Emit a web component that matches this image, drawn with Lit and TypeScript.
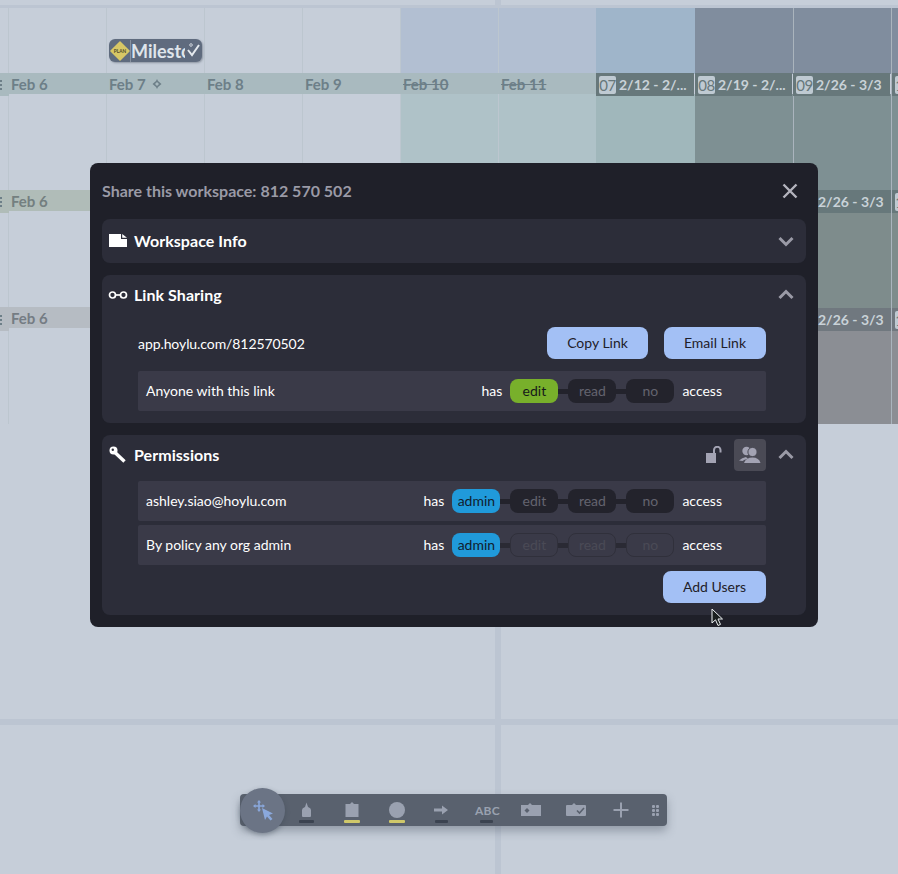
import { LitElement, css, html, svg, unsafeCSS } from "lit";
import { customElement } from "lit/decorators.js";

const FONT = unsafeCSS(`Lato, "Open Sans", "Liberation Sans", sans-serif`);

type Cell = { x: number; w: number; color: string };

const cells: Cell[] = [
  { x: 9, w: 98, color: "#c6ced9" },
  { x: 107, w: 98, color: "#c6ced9" },
  { x: 205, w: 98, color: "#c6ced9" },
  { x: 303, w: 97, color: "#c6ced9" },
  { x: 400, w: 98, color: "#b2bfd2" },
  { x: 498, w: 98, color: "#b2bfd2" },
  { x: 596, w: 99, color: "#9fb5ca" },
  { x: 695, w: 98, color: "#808d9e" },
  { x: 793, w: 98, color: "#808d9e" },
  { x: 891, w: 7, color: "#808d9e" },
];

const dayLabels = [
  { x: 11, t: "Feb 6" },
  { x: 109, t: "Feb 7" },
  { x: 207, t: "Feb 8" },
  { x: 305, t: "Feb 9" },
];

const sprints = [
  { x: 596, w: 99, n: "07", t: "2/12 - 2/..." },
  { x: 695, w: 98, n: "08", t: "2/19 - 2/..." },
  { x: 793, w: 98, n: "09", t: "2/26 - 3/3" },
];

const toolIcons = [
  { x: 66, bar: "#3b4350", w: 15, icon: svg`<path d="M10.5 2.5 L12 7 Q15 8 15 10 V16 Q15 17 14 17 H7 Q6 17 6 16 V10 Q6 8 9 7 Z" fill="#9aa1b0"/>` },
  { x: 112, bar: "#cfc86a", w: 16, icon: svg`<path d="M3.5 4 H8 L10 2 L12 4 H16.5 V17 H3.5 Z" fill="#9aa1b0"/>` },
  { x: 157, bar: "#cfc86a", w: 16, icon: svg`<circle cx="10" cy="10" r="8" fill="#9aa1b0"/>` },
  { x: 201, bar: "#3b4350", w: 13, icon: svg`<path d="M3 8.5 H11 V5.5 L17 10 L11 14.5 V11.5 H3 Z" fill="#9aa1b0"/>` },
  { x: 246, bar: "#3b4350", w: 13, icon: svg`` },
  { x: 291, bar: "", w: 0, icon: svg`<path d="M0 5 H7 L9 3 L11 5 H20 V16 H0 Z" fill="#9aa1b0"/><path d="M6 8 L8.5 10.5 L6 13 L3.5 10.5 Z" fill="#59616e"/>` },
  { x: 336, bar: "", w: 0, icon: svg`<path d="M1 5 H6 L8 3 L10 5 H19 Q20 5 20 6 V15 Q20 16 19 16 H1 Q0 16 0 15 V6 Q0 5 1 5 Z" fill="#9aa1b0"/><path d="M11 10.5 L13.5 13 L18 8" fill="none" stroke="#59616e" stroke-width="1.6"/>` },
  { x: 381, bar: "", w: 0, icon: svg`<path d="M9 2.5 H11 V9 H17.5 V11 H11 V17.5 H9 V11 H2.5 V9 H9 Z" fill="#9aa1b0"/>` },
];

@customElement("app-root")
export class AppRoot extends LitElement {
  static styles = css`
    :host {
      display: block;
      font-family: ${FONT};
    }

    .page {
      position: relative;
      width: 898px;
      height: 874px;
      overflow: hidden;
      background: #c6ced9;
    }

    /* whiteboard canvas: things sit at their place on the board */
    .abs {
      position: absolute;
    }

    .cell {
      position: absolute;
    }

    .green {
      background: #afc2c8;
    }

    .line {
      position: absolute;
      background: #bcc5d2;
    }

    .grid-v {
      position: absolute;
      width: 1px;
      background: #bcc6cf;
    }

    .band {
      position: absolute;
      left: 0;
      height: 21px;
      width: 596px;
      background: #a9babf;
    }

    .stub {
      position: absolute;
      left: 0;
      width: 9px;
      height: 23px;
      display: flex;
      flex-direction: column;
      justify-content: center;
      gap: 2px;
      background: #a9babf;
    }

    .stub i {
      width: 2px;
      height: 2px;
      background: #6d7f88;
    }

    .label {
      position: absolute;
      font-size: 15px;
      font-weight: 700;
      line-height: 22px;
      color: #6d7f88;
      white-space: nowrap;
    }

    .strike {
      text-decoration: line-through;
    }

    .sprint {
      position: absolute;
      display: flex;
      align-items: center;
      gap: 3px;
      height: 23px;
      padding-left: 3px;
      box-sizing: border-box;
      background: #67787b;
      color: #c9d2d8;
      font-size: 14px;
      font-weight: 700;
      white-space: nowrap;
      overflow: hidden;
    }

    .sprint b {
      display: flex;
      align-items: center;
      justify-content: center;
      width: 17px;
      height: 18px;
      border-radius: 2px;
      background: #bfcad2;
      color: #67787b;
      font-weight: 400;
      font-size: 15px;
      letter-spacing: -0.5px;
      flex: none;
    }

    .milestone {
      position: absolute;
      left: 109px;
      top: 39px;
      width: 93px;
      height: 23px;
      box-sizing: border-box;
      display: flex;
      align-items: center;
      padding-left: 1px;
      border-radius: 6px;
      background: #5f6b7e;
      box-shadow: 1px 1px 2px rgba(70, 80, 95, 0.45);
      color: #dfe5eb;
      font-size: 18px;
      font-weight: 700;
      overflow: hidden;
    }

    .milestone span {
      width: 54px;
      overflow: hidden;
      white-space: nowrap;
      border-left: 1px solid #87919f;
    }

    /* dialog */
    .modal {
      position: absolute;
      left: 90px;
      top: 163px;
      width: 728px;
      height: 464px;
      box-sizing: border-box;
      padding: 0 12px;
      border-radius: 8px;
      background: #1f2029;
      color: #fff;
      display: flex;
      flex-direction: column;
      gap: 12px;
    }

    .modal-head {
      display: flex;
      align-items: center;
      justify-content: space-between;
      height: 56px;
      color: #9a9aa6;
      font-size: 16px;
      font-weight: 700;
    }

    .modal-head span {
      margin-bottom: 2px;
    }

    .modal-head svg {
      margin-right: 7px;
      margin-top: -1px;
    }

    .panel {
      border-radius: 8px;
      background: #2c2d39;
    }

    .panel-head {
      display: flex;
      align-items: center;
      height: 44px;
      padding: 0 11px 0 6px;
      font-size: 16px;
      font-weight: 700;
    }

    .panel-head.link {
      height: 39px;
      margin-bottom: 13px;
    }

    .panel-head.perm {
      height: 40px;
      margin-bottom: 6px;
    }

    .panel-head .ico {
      width: 20px;
      height: 20px;
      margin-right: 6px;
      flex: none;
    }

    .panel-head .title {
      flex: 1;
      letter-spacing: 0.05px;
      margin-bottom: 1px;
    }

    .first {
      margin-top: -12px;
    }

    .link-line {
      display: flex;
      align-items: center;
      height: 32px;
      margin: 0 40px 12px 36px;
      font-size: 14px;
    }

    .link-line .url {
      flex: 1;
      letter-spacing: -0.08px;
    }

    .btn {
      display: flex;
      align-items: center;
      justify-content: center;
      box-sizing: border-box;
      height: 32px;
      padding-bottom: 2px;
      border-radius: 8px;
      background: #a3c0f5;
      color: #1f2029;
      font-size: 14px;
    }

    .w101 {
      width: 101px;
    }

    .w102 {
      width: 102px;
      margin-left: 16px;
    }

    .row {
      display: flex;
      align-items: center;
      height: 40px;
      margin: 0 40px 0 36px;
      padding: 0 44px 0 8px;
      background: #3a3a48;
      border-radius: 2px;
      font-size: 14px;
    }

    .row .who {
      flex: 1;
      margin-bottom: 2px;
    }

    .row + .row {
      margin-top: 4px;
    }

    .row.last {
      margin-bottom: 12px;
    }

    .has {
      margin: 0 8px 2px 0;
    }

    .access {
      margin: 0 0 2px 8px;
    }

    .pills {
      display: flex;
      align-items: center;
    }

    .pill {
      display: flex;
      align-items: center;
      justify-content: center;
      box-sizing: border-box;
      width: 48px;
      height: 24px;
      padding-bottom: 2px;
      border-radius: 8px;
      background: #23232c;
      color: #64646f;
      font-size: 14px;
    }

    .joint {
      width: 10px;
      height: 5px;
      background: #23232c;
    }

    .pill.green-on {
      background: #78b02b;
      color: #15181a;
    }

    .pill.blue-on {
      background: #209ada;
      color: #10202e;
    }

    .pill.off {
      background: transparent;
      border: 1px solid #30303b;
      color: #4a4a56;
    }

    .joint.off {
      background: #2a2a34;
    }

    .perm-actions {
      display: flex;
      align-items: center;
    }

    .people {
      display: flex;
      align-items: center;
      justify-content: center;
      width: 32px;
      height: 32px;
      margin: 0 11px 0 12px;
      border-radius: 4px;
      background: #4a4a55;
    }

    .add-line {
      display: flex;
      justify-content: flex-end;
      margin: 6px 40px 12px 0;
    }

    .add-line .btn {
      width: 103px;
    }

    .cursor {
      position: absolute;
      left: 711px;
      top: 608px;
    }

    /* toolbar */
    .toolbar {
      position: absolute;
      left: 240px;
      top: 794px;
      width: 427px;
      height: 32px;
      border-radius: 4px;
      background: #59616e;
      box-shadow: 0 5px 10px rgba(70, 80, 95, 0.4);
    }

    .mode {
      position: absolute;
      left: 0;
      top: -6px;
      width: 45px;
      height: 45px;
      border-radius: 50%;
      background: #6b7485;
      box-shadow: 0 2px 5px rgba(60, 70, 85, 0.45);
    }

    .tool {
      position: absolute;
      top: 6px;
      width: 20px;
      height: 20px;
    }

    .bar {
      position: absolute;
      top: 26px;
      height: 3px;
      border-radius: 1px;
    }

    .abc {
      position: absolute;
      top: 9px;
      left: 235px;
      color: #9aa1b0;
      font-size: 12px;
      font-weight: 700;
      letter-spacing: 0.2px;
    }

    .dots {
      position: absolute;
      left: 412px;
      top: 11px;
      display: grid;
      grid-template-columns: 3px 3px;
      gap: 1px;
    }

    .dots i {
      width: 3px;
      height: 3px;
      background: #9aa1b0;
      border-radius: 1px;
    }
  `;

  private renderStub(top: number, color: string) {
    return html`<div class="stub" style="top:${top}px;background:${color}">
      <i></i><i></i><i></i>
    </div>`;
  }

  private renderPills(active: string, tone: string, dim = false, admin = true) {
    const names = admin ? ["admin", "edit", "read", "no"] : ["edit", "read", "no"];
    const out: unknown[] = [];
    names.forEach((n, i) => {
      if (i > 0) {
        out.push(html`<div class="joint ${dim ? "off" : ""}"></div>`);
      }
      const cls = n === active ? tone : dim ? "off" : "";
      out.push(html`<div class="pill ${cls}">${n}</div>`);
    });
    return html`<div class="pills">${out}</div>`;
  }

  private chevron(up: boolean) {
    return html`<svg width="18" height="18" viewBox="0 0 18 18">
      <path
        d=${up ? "M2.5 12 L9 5.5 L15.5 12" : "M2.5 6 L9 12.5 L15.5 6"}
        fill="none"
        stroke="#9a9aa6"
        stroke-width="3"
      />
    </svg>`;
  }

  render() {
    return html`
      <div class="page">
        ${cells.map(
          (c) => html`<div class="cell" style="left:${c.x}px;top:8px;width:${c.w}px;height:66px;background:${c.color}"></div>`,
        )}
        <div class="cell green" style="left:400px;top:94px;width:196px;height:70px"></div>
        <div class="cell" style="left:596px;top:94px;width:99px;height:70px;background:#a0b7bb"></div>
        <div class="cell" style="left:695px;top:94px;width:203px;height:96px;background:#7e9093"></div>
        <div class="cell" style="left:818px;top:212px;width:80px;height:96px;background:#7e8c8c"></div>
        <div class="cell" style="left:818px;top:330px;width:80px;height:94px;background:#8b8e94"></div>

        <div class="line" style="left:0;top:5px;width:898px;height:3px"></div>
        <div class="line" style="left:495px;top:0;width:6px;height:8px"></div>
        <div class="line" style="left:495px;top:627px;width:6px;height:247px"></div>
        <div class="line" style="left:0;top:719px;width:898px;height:6px"></div>

        ${[8, 106, 204, 302, 400, 498].map(
          (x) => html`<div class="grid-v" style="left:${x}px;top:8px;height:${x === 8 ? 416 : 155}px"></div>`,
        )}
        <div class="grid-v" style="left:793px;top:8px;height:182px;background:#aab4bd"></div>
        <div class="grid-v" style="left:891px;top:8px;height:416px;background:#aab4bd"></div>

        <div class="band" style="top:73px"></div>
        ${this.renderStub(73, "#a9babf")}
        ${dayLabels.map(
          (d) => html`<div class="label" style="left:${d.x}px;top:73px">${d.t}</div>`,
        )}
        <svg class="abs" style="left:152px;top:79px" width="10" height="10" viewBox="0 0 10 10">
          <path d="M5 0 L6 2 L9.5 5 L6 8 L5 10 L4 8 L.5 5 L4 2 Z M5 3 L3 5 L5 7 L7 5 Z" fill="#6d7f88" fill-rule="evenodd" />
        </svg>
        <div class="label strike" style="left:403px;top:73px">Feb 10</div>
        <div class="label strike" style="left:501px;top:73px">Feb 11</div>
        ${sprints.map(
          (s) => html`<div class="sprint" style="left:${s.x}px;top:73px;width:${s.w - 1}px"><b>${s.n}</b>${s.t}</div>`,
        )}
        <div class="sprint" style="left:892px;top:73px;width:6px"><b>10</b></div>

        <div class="milestone">
          <svg width="20" height="20" viewBox="0 0 21 21" style="flex:none">
            <path d="M10.5 1 L20 10.5 L10.5 20 L1 10.5 Z" fill="#d7c766" stroke="#d7c766" stroke-linejoin="round" stroke-width="1.5" />
            <text x="10.5" y="12.3" font-size="5" font-weight="700" text-anchor="middle" fill="#4d4a2a">PLAN</text>
          </svg>
          <span>Milestone</span>
          <svg class="abs" style="left:78px;top:3px" width="13" height="16" viewBox="0 0 13 16">
            <path d="M1 8 L5 13 L12 3" fill="none" stroke="#e4e9ee" stroke-width="2" />
            <circle cx="4" cy="3" r="1.3" fill="none" stroke="#e4e9ee" stroke-width=".8" />
          </svg>
        </div>

        <div class="band" style="top:190px;width:90px;background:#b0bcb8"></div>
        ${this.renderStub(190, "#b0bcb8")}
        <div class="label" style="left:11px;top:190px;color:#747f80">Feb 6</div>
        <div class="band" style="top:307px;width:90px;background:#b6bcc3"></div>
        ${this.renderStub(308, "#b6bcc3")}
        <div class="label" style="left:11px;top:307px;color:#757c84">Feb 6</div>
        <div class="sprint" style="left:818px;top:190px;width:73px;padding-left:0">2/26 - 3/3</div>
        <div class="sprint" style="left:818px;top:308px;width:73px;padding-left:0;background:#70787f">2/26 - 3/3</div>
        <div class="sprint" style="left:892px;top:190px;width:6px"><b>10</b></div>
        <div class="sprint" style="left:892px;top:308px;width:6px;background:#70787f"><b>10</b></div>

        <div class="modal">
          <div class="modal-head">
            <span>Share this workspace: 812 570 502</span>
            <svg width="18" height="18" viewBox="0 0 18 18">
              <path d="M2.5 2.5 L15.5 15.5 M15.5 2.5 L2.5 15.5" stroke="#b3b3bd" stroke-width="2.4" />
            </svg>
          </div>

          <section class="panel first">
            <div class="panel-head">
              <svg class="ico" viewBox="0 0 20 20">
                <path d="M1 3 H13 V8 H19 V16 H1 Z M14.2 3 L19 6.8 H14.2 Z" fill="#fff" />
              </svg>
              <span class="title">Workspace Info</span>
              ${this.chevron(false)}
            </div>
          </section>

          <section class="panel">
            <div class="panel-head link">
              <svg class="ico" viewBox="0 0 20 20">
                <circle cx="4.5" cy="10" r="3" fill="none" stroke="#fff" stroke-width="1.7" />
                <circle cx="15.5" cy="10" r="3" fill="none" stroke="#fff" stroke-width="1.7" />
                <path d="M7.5 10 H12.5" stroke="#fff" stroke-width="1.7" />
              </svg>
              <span class="title">Link Sharing</span>
              ${this.chevron(true)}
            </div>
            <div class="link-line">
              <span class="url">app.hoylu.com/812570502</span>
              <div class="btn w101">Copy Link</div>
              <div class="btn w102">Email Link</div>
            </div>
            <div class="row last">
              <span class="who">Anyone with this link</span>
              <span class="has">has</span>
              ${this.renderPills("edit", "green-on", false, false)}
              <span class="access">access</span>
            </div>
          </section>

          <section class="panel">
            <div class="panel-head perm">
              <svg class="ico" viewBox="0 0 20 20">
                <circle cx="5.5" cy="5.5" r="4" fill="#fff" />
                <circle cx="4.8" cy="4.8" r="1.2" fill="#2c2d39" />
                <path d="M7 7.5 L16.5 16.5" stroke="#fff" stroke-width="3.4" />
              </svg>
              <span class="title">Permissions</span>
              <div class="perm-actions">
                <svg width="18" height="18" viewBox="0 0 18 18">
                  <path d="M2 7 H12 V17 H2 Z" fill="#a3a3b3" />
                  <path d="M10 7 V4 A3 3 0 0 1 16.5 4 V6.5" fill="none" stroke="#a3a3b3" stroke-width="2" />
                </svg>
                <div class="people">
                  <svg width="24" height="22" viewBox="0 0 24 22">
                    <circle cx="8.5" cy="7" r="4.2" fill="#a3a3b3" />
                    <circle cx="14.5" cy="8" r="4.6" fill="#a3a3b3" stroke="#4a4a55" stroke-width="1" />
                    <path d="M1 16.5 Q4 13.5 8 13 L10 15 Q6 15.5 4.5 17 Z" fill="#a3a3b3" />
                    <path d="M6 19 Q8 13.5 14.5 13.5 Q21 13.5 22.5 19 Z" fill="#a3a3b3" />
                  </svg>
                </div>
                ${this.chevron(true)}
              </div>
            </div>
            <div class="row">
              <span class="who">ashley.siao@hoylu.com</span>
              <span class="has">has</span>
              ${this.renderPills("admin", "blue-on")}
              <span class="access">access</span>
            </div>
            <div class="row">
              <span class="who">By policy any org admin</span>
              <span class="has">has</span>
              ${this.renderPills("admin", "blue-on", true)}
              <span class="access">access</span>
            </div>
            <div class="add-line"><div class="btn">Add Users</div></div>
          </section>
        </div>

        <svg class="cursor" width="13" height="19" viewBox="0 0 13 19">
          <path d="M1 1 V15 L4.5 11.8 L7 17.5 L9.5 16.4 L7 11 H11.5 Z" fill="#1b2020" stroke="#eef2f5" stroke-width="1" />
        </svg>

        <div class="toolbar">
          <div class="mode">
            <svg class="abs" style="left:12px;top:11px" width="22" height="24" viewBox="0 0 22 24">
              <path d="M7 1 L9 3.5 H7.8 V6.2 H10.5 V5 L13 7 L10.5 9 V7.8 H7.8 V10.5 H9 L7 13 L5 10.5 H6.2 V7.8 H3.5 V9 L1 7 L3.5 5 V6.2 H6.2 V3.5 H5 Z" fill="#8aa8dc" />
              <path d="M10 9 L21 14.5 L17 16 L20.5 20 L18.5 21.5 L15 17.5 L13 21 Z" fill="#8aa8dc" />
            </svg>
          </div>
          ${toolIcons.map(
            (t) => html`
              <svg class="tool" style="left:${t.x - 10}px" viewBox="0 0 20 20">${t.icon}</svg>
              ${t.w
                ? html`<div class="bar" style="left:${t.x - t.w / 2}px;width:${t.w}px;background:${t.bar}"></div>`
                : null}
            `,
          )}
          <div class="abc">ABC</div>
          <div class="dots">${[0, 1, 2, 3, 4, 5].map(() => html`<i></i>`)}</div>
        </div>
      </div>
    `;
  }
}

declare global {
  interface HTMLElementTagNameMap {
    "app-root": AppRoot;
  }
}
